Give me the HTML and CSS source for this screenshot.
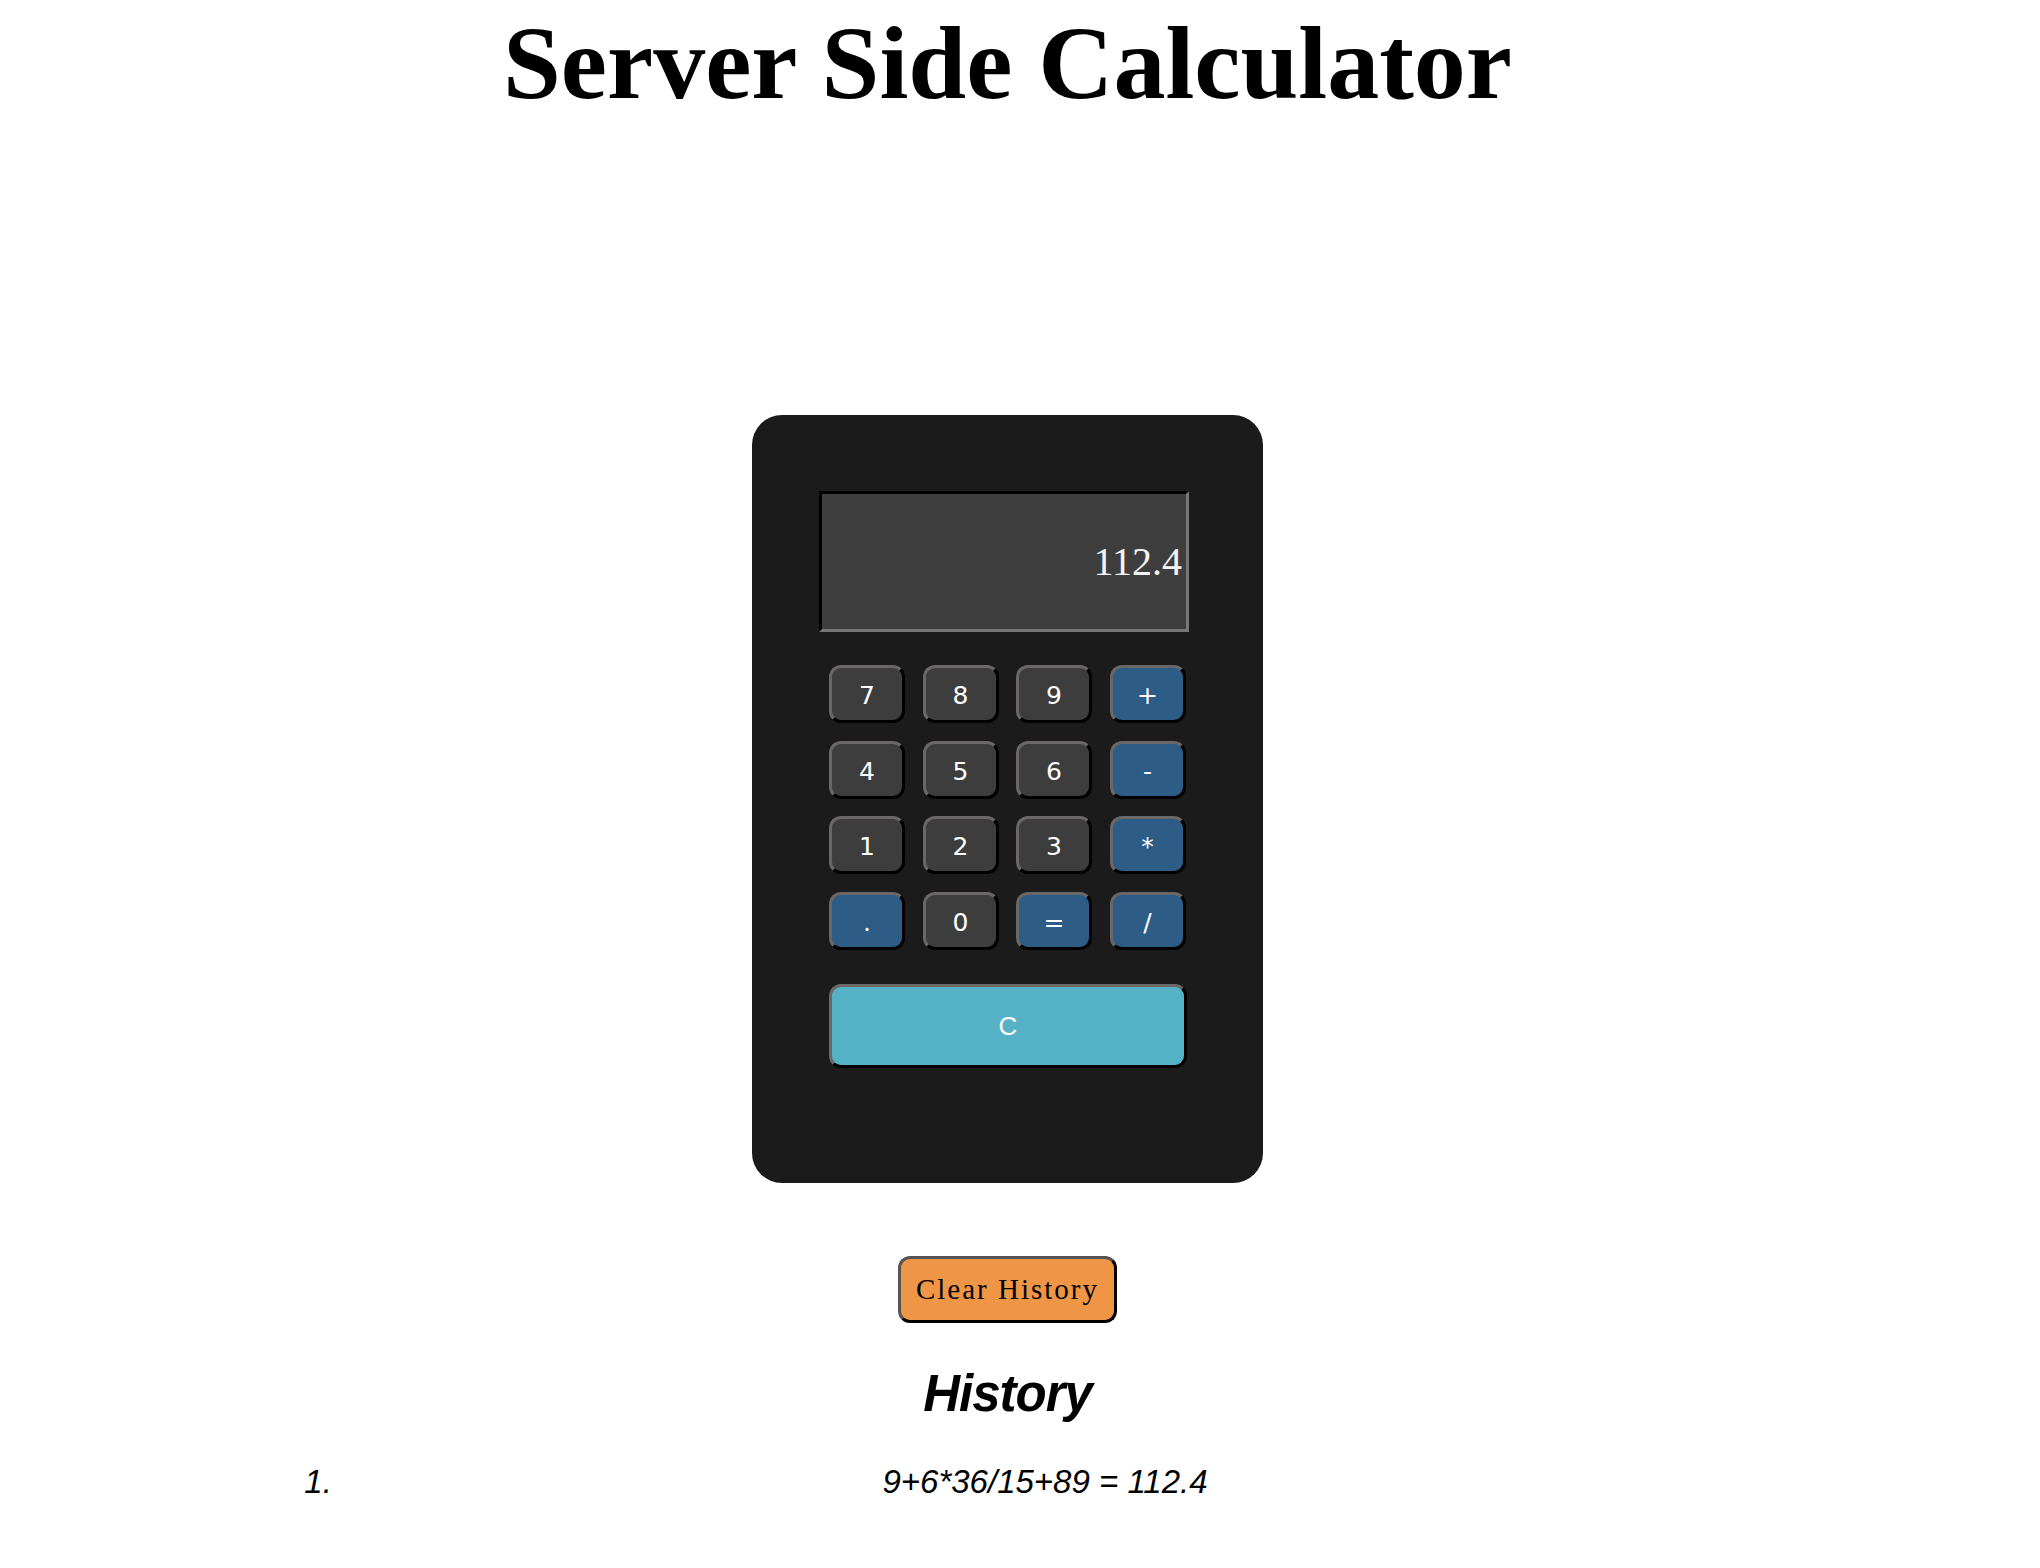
FILE: index.html
```html
<!DOCTYPE html>
<html lang="en">
<head>
<meta charset="utf-8">
<title>Server Side Calculator</title>
<link rel="stylesheet" href="styles.css">
</head>
<body>
<div class="page">
  <h1 class="title">Server Side Calculator</h1>
  <div class="calc">
    <div class="display">112.4</div>
    <div class="keys">
      <button class="key">7</button>
      <button class="key">8</button>
      <button class="key">9</button>
      <button class="key op">+</button>
      <button class="key">4</button>
      <button class="key">5</button>
      <button class="key">6</button>
      <button class="key op">-</button>
      <button class="key">1</button>
      <button class="key">2</button>
      <button class="key">3</button>
      <button class="key op">*</button>
      <button class="key op">.</button>
      <button class="key">0</button>
      <button class="key op">=</button>
      <button class="key op">/</button>
    </div>
    <button class="clear-key">C</button>
  </div>
  <button class="clear-history">Clear History</button>
  <h2 class="history-title">History</h2>
</div>
<ol class="history-list">
  <li>9+6*36/15+89 = 112.4</li>
</ol>
</body>
</html>
```

FILE: styles.css
```css
html, body {
  margin: 0;
  padding: 0;
  background: #ffffff;
}

body {
  font-family: "Liberation Sans", Arial, sans-serif;
  color: #000;
}

.page {
  padding-right: 25px;
}

.title {
  margin: 0;
  padding-top: 3px;
  font-family: "Liberation Serif", "Times New Roman", serif;
  font-weight: bold;
  font-size: 104px;
  line-height: 120px;
  text-align: center;
}

.calc {
  box-sizing: border-box;
  width: 511px;
  height: 768px;
  margin: 292px auto 0;
  padding: 76px 74px 0 67px;
  background: #1c1b1c;
  border-radius: 30px;
}

.display {
  box-sizing: border-box;
  height: 141px;
  border: 3px solid;
  border-color: #000 #777 #777 #000;
  background: #3e3e3e;
  color: #f4f4f4;
  font-family: "Liberation Serif", "Times New Roman", serif;
  font-size: 40px;
  display: flex;
  align-items: center;
  justify-content: flex-end;
  padding-right: 4px;
}

.keys {
  margin: 33px 0 0 10px;
  display: grid;
  grid-template-columns: repeat(4, 76px);
  grid-auto-rows: 58px;
  column-gap: 17.5px;
  row-gap: 17.7px;
}

.key {
  box-sizing: border-box;
  margin: 0;
  padding: 3px 0 0;
  border: 3px solid;
  border-color: #6b6767 #000 #000 #6b6767;
  border-radius: 12px;
  background: #3d3d3d;
  color: #ffffff;
  font-family: "DejaVu Sans", Verdana, sans-serif;
  font-size: 25px;
  line-height: 1;
}

.key.op {
  background: #2d5c86;
}

.clear-key {
  box-sizing: border-box;
  display: block;
  margin: 34px 0 0 10px;
  width: 358px;
  height: 84px;
  padding: 0;
  border: 3px solid;
  border-color: #6b6767 #000 #000 #6b6767;
  border-radius: 12px;
  background: #54b1c6;
  color: #ffffff;
  font-family: "Liberation Sans", Arial, sans-serif;
  font-size: 26px;
}

.clear-history {
  box-sizing: border-box;
  display: block;
  margin: 73px auto 0;
  width: 219px;
  height: 67px;
  padding: 0;
  border: 3px solid;
  border-color: #555 #000 #000 #555;
  border-radius: 12px;
  background: #ef9546;
  color: #000;
  font-family: "Liberation Serif", "Times New Roman", serif;
  font-size: 29px;
  letter-spacing: 2px;
}

.history-title {
  margin: 41px 0 0;
  font-family: "Liberation Sans", Arial, sans-serif;
  font-style: italic;
  font-weight: bold;
  font-size: 51px;
  line-height: 60px;
  letter-spacing: -1px;
  text-align: center;
}

.history-list {
  margin: 38px 291px 0 301px;
  padding: 0 0 0 40px;
  font-family: "Liberation Sans", Arial, sans-serif;
  font-style: italic;
  font-size: 33px;
  line-height: 40px;
}

.history-list li {
  text-align: center;
}
```
